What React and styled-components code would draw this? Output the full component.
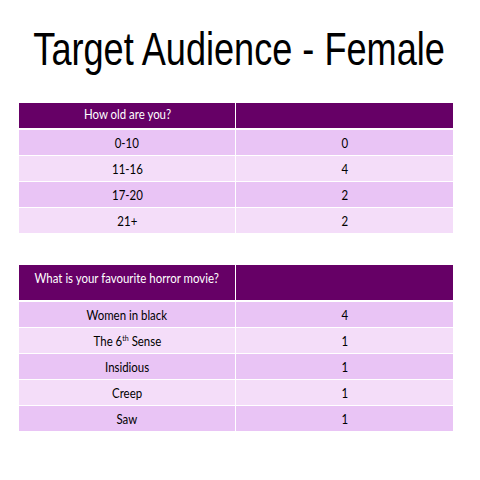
import styled, { createGlobalStyle } from 'styled-components';

const GlobalStyle = createGlobalStyle`
  body {
    margin: 0;
    background: #ffffff;
  }
`;

const Page = styled.div`
  width: 480px;
  height: 480px;
  padding: 26px 0 0 19px;
  box-sizing: border-box;
`;

const Title = styled.h1`
  margin: 0 0 31px -19px;
  width: 478px;
  display: flex;
  justify-content: center;
  font-family: "Liberation Sans", Arial, sans-serif;
  font-weight: normal;
  font-size: 46px;
  line-height: 46px;
  color: #000000;
`;

const TitleText = styled.span`
  white-space: nowrap;
  transform: scaleX(0.785);
`;

const Table = styled.div`
  width: 434px;
  display: grid;
  grid-template-columns: 216px 217px;
  column-gap: 1px;
  row-gap: 1px;
  margin-bottom: ${({ $gap }) => $gap || 0}px;
  font-family: Lato, "Open Sans", sans-serif;
  font-size: 13px;
`;

const HeadCell = styled.div`
  background: #660066;
  color: #ffffff;
  height: ${({ $height }) => $height}px;
  padding-top: ${({ $pad }) => $pad}px;
  box-sizing: border-box;
  text-align: center;
  margin-bottom: 1px;
`;

const Cell = styled.div`
  background: ${({ $odd }) => ($odd ? '#e9c4f5' : '#f4ddf9')};
  color: #000000;
  height: 25px;
  display: flex;
  align-items: center;
  justify-content: center;
`;

const Label = styled.span`
  display: inline-block;
  white-space: nowrap;
  transform: scaleX(0.88);
`;

const Sup = styled.sup`
  font-size: 8px;
  line-height: 0;
`;

const ages = [
  ['0-10', '0'],
  ['11-16', '4'],
  ['17-20', '2'],
  ['21+', '2'],
];

const movies = [
  ['Women in black', '4'],
  [<>The 6<Sup>th</Sup>{' '}Sense</>, '1'],
  ['Insidious', '1'],
  ['Creep', '1'],
  ['Saw', '1'],
];

const Rows = ({ rows }) =>
  rows.map(([label, count], i) => [
    <Cell key={`l${i}`} $odd={i % 2 === 0}><Label>{label}</Label></Cell>,
    <Cell key={`c${i}`} $odd={i % 2 === 0}><Label>{count}</Label></Cell>,
  ]);

export default function App() {
  return (
    <Page>
      <GlobalStyle />
      <Title><TitleText>Target Audience - Female</TitleText></Title>
      <Table $gap={32}>
        <HeadCell $height={25} $pad={3}><Label>How old are you?</Label></HeadCell>
        <HeadCell $height={25} $pad={3} />
        <Rows rows={ages} />
      </Table>
      <Table>
        <HeadCell $height={35} $pad={5}><Label>What is your favourite horror movie?</Label></HeadCell>
        <HeadCell $height={35} $pad={5} />
        <Rows rows={movies} />
      </Table>
    </Page>
  );
}
